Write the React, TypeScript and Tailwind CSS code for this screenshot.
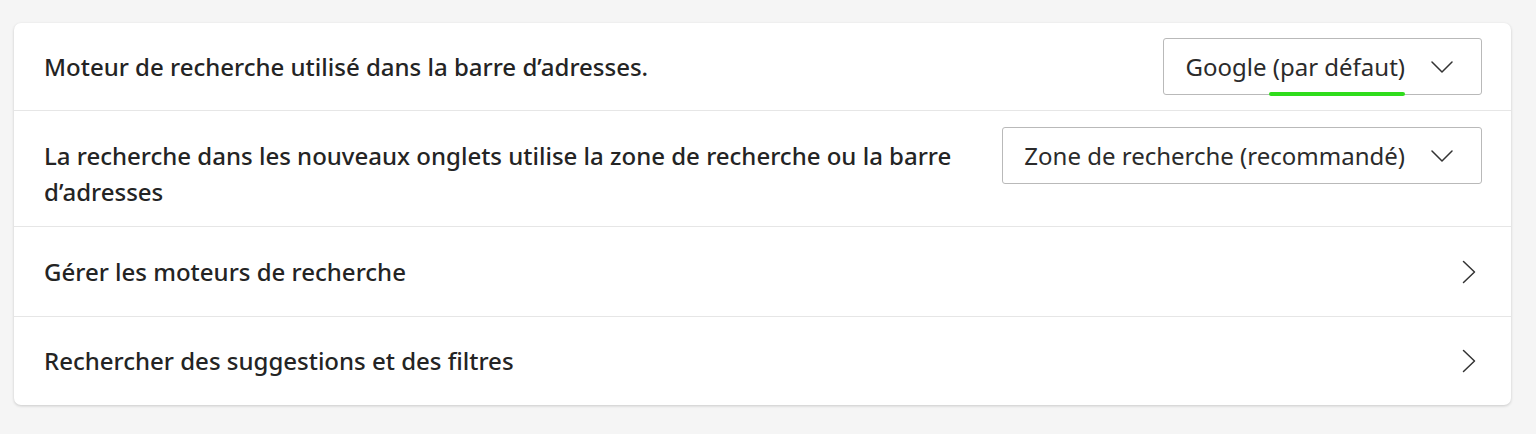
import { ReactNode } from "react";

function ChevronDown() {
  return (
    <svg width="22" height="12" viewBox="0 0 22 12" fill="none" className="shrink-0">
      <path d="M1 1l10 10L21 1" stroke="#333" strokeWidth="1.5" strokeLinecap="round" strokeLinejoin="round" />
    </svg>
  );
}

function ChevronRight() {
  return (
    <svg width="14" height="24" viewBox="0 0 14 24" fill="none" className="shrink-0">
      <path d="M1.5 1.5l11 10.5-11 10.5" stroke="#333" strokeWidth="1.5" strokeLinecap="round" strokeLinejoin="round" />
    </svg>
  );
}

function Select({ children, highlight }: { children: ReactNode; highlight?: boolean }) {
  return (
    <div className="relative flex h-[57px] shrink-0 items-center gap-[26px] rounded-[3px] border border-[#b9b9b9] bg-white pl-[21px] pr-[28px] text-[24px] text-[#2b2b2b]">
      <span className="relative leading-[32px]">
        {children}
        {highlight && (
          <span className="absolute right-0 top-[41px] h-[4px] w-[136px] rounded-full bg-[#2fdc1c]" />
        )}
      </span>
      <ChevronDown />
    </div>
  );
}

export default function App() {
  return (
    <div
      className="min-h-[434px] bg-[#f5f5f5] pt-[23px]"
      style={{ fontFamily: '"Noto Sans", "Open Sans", sans-serif' }}
    >
      <div className="ml-[14px] w-[1497px] rounded-[7px] bg-white shadow-[0_1px_3px_rgba(0,0,0,0.18)]">
        <div className="flex items-center justify-between border-b border-[#e6e6e6] py-[15px] pl-[30px] pr-[29px]">
          <span className="text-[24px] font-medium leading-[36px] text-[#242424]">
            Moteur de recherche utilisé dans la barre d’adresses.
          </span>
          <Select highlight>Google (par défaut)</Select>
        </div>
        <div className="flex items-start justify-between gap-[40px] border-b border-[#e6e6e6] pb-[16px] pl-[30px] pr-[29px] pt-[16px]">
          <span className="max-w-[930px] pt-[11px] text-[24px] font-medium leading-[36px] text-[#242424]">
            La recherche dans les nouveaux onglets utilise la zone de recherche ou la barre d’adresses
          </span>
          <Select>Zone de recherche (recommandé)</Select>
        </div>
        <div className="flex h-[90px] items-center justify-between border-b border-[#e6e6e6] pl-[30px] pr-[35px]">
          <span className="text-[24px] font-medium text-[#242424]">Gérer les moteurs de recherche</span>
          <ChevronRight />
        </div>
        <div className="flex h-[88px] items-center justify-between pl-[30px] pr-[35px]">
          <span className="text-[24px] font-medium text-[#242424]">Rechercher des suggestions et des filtres</span>
          <ChevronRight />
        </div>
      </div>
    </div>
  );
}
